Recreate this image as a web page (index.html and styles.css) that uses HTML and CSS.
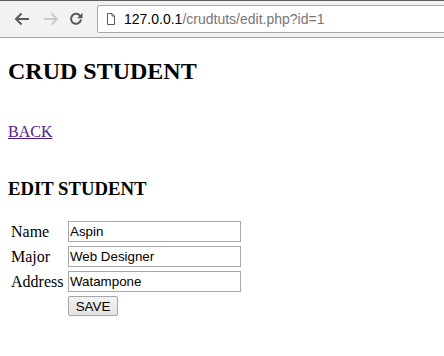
FILE: index.html
```html
<!DOCTYPE html>
<html>

	<head>
		<meta charset="utf-8" />
		<title>Edit Student</title>
		<link rel="stylesheet" href="styles.css">
	</head>

	<body>
		<!-- browser toolbar -->
		<div id="toolbar">
			<span class="nav back">
				<svg width="16" height="14" viewBox="0 0 16 14"><path d="M15 7H2.5M7.5 1.5L2 7l5.5 5.5" fill="none" stroke="#5a5a5a" stroke-width="2"/></svg>
			</span>
			<span class="nav forward">
				<svg width="16" height="14" viewBox="0 0 16 14"><path d="M1 7h12.5M8.5 1.5L14 7l-5.5 5.5" fill="none" stroke="#c9c9c9" stroke-width="2"/></svg>
			</span>
			<span class="nav reload">
				<svg width="14" height="14" viewBox="0 0 14 14"><path d="M11.3 4.2A5 5 0 1 0 12 7.5" fill="none" stroke="#5a5a5a" stroke-width="2"/><path d="M13.5 0.8v5.4H8.1z" fill="#5a5a5a"/></svg>
			</span>
			<div id="omnibox">
				<svg class="doc" width="10" height="12" viewBox="0 0 10 12"><path d="M1.5 0.5h4.5l2.5 2.5v8.5h-7z M6 0.5v2.5h2.5" fill="#fff" stroke="#5a5a5a" stroke-width="1"/></svg>
				<span class="host">127.0.0.1</span><span class="path">/crudtuts/edit.php?id=1</span>
			</div>
		</div>

		<div id="page">
			<h2>CRUD STUDENT</h2>
			<br />
			<a href="index.php">BACK</a>
			<br /><br />
			<h3>EDIT STUDENT</h3>
			<form method="post" action="update.php">
				<table>
					<tr>
						<td class="label">Name</td>
						<td><input type="text" name="name" value="Aspin" /></td>
					</tr>
					<tr>
						<td class="label">Major</td>
						<td><input type="text" name="major" value="Web Designer" /></td>
					</tr>
					<tr>
						<td class="label">Address</td>
						<td><input type="text" name="address" value="Watampone" /></td>
					</tr>
					<tr>
						<td></td>
						<td><input type="submit" class="save" value="SAVE" /></td>
					</tr>
				</table>
			</form>
		</div>
	</body>

</html>
```
FILE: styles.css
```css
body {
	margin: 0;
	font-family: "Liberation Serif", "Times New Roman", serif;
	font-size: 16px;
	background: white;
}

#toolbar {
	height: 38px;
	box-sizing: border-box;
	background: #f2f2f2;
	border-top: 1px solid #5f5f5f;
	border-bottom: 1px solid #a3a3a3;
	padding: 4px 0 0 8px;
	display: flex;
	align-items: flex-start;
	overflow: hidden;
}

.nav {
	flex: none;
	height: 28px;
	display: flex;
	align-items: center;
	justify-content: center;
}

.back {
	width: 28px;
}

.forward {
	width: 30px;
}

.reload {
	width: 20px;
}

#omnibox {
	flex: none;
	width: 360px;
	height: 28px;
	box-sizing: border-box;
	margin-left: 11px;
	background: white;
	border: 1px solid #a9a9a9;
	border-radius: 2px;
	display: flex;
	align-items: center;
	padding-left: 8px;
	font-family: "Liberation Sans", Arial, sans-serif;
	font-size: 14px;
}

.doc {
	flex: none;
	margin-right: 8px;
	margin-top: -1px;
}

.host {
	color: #000;
}

.path {
	color: #767676;
}

#page {
	margin: 8px;
}

h2 {
	font-size: 24px;
	margin: 19.92px 0;
}

h3 {
	font-size: 18.72px;
	margin: 18.72px 0;
}

a {
	color: #551a8b;
}

table {
	border-spacing: 2px;
}

td {
	padding: 1px;
}

.label {
	min-width: 53px;
}

input {
	font-family: "Liberation Sans", Arial, sans-serif;
	font-size: 13.333px;
	color: #000;
	margin: 0;
	display: block;
}

input[type=text] {
	width: 173px;
	height: 21px;
	box-sizing: border-box;
	border: 1px solid #a9a9a9;
	padding: 1px 1px;
}

.save {
	width: 50px;
	height: 20px;
	padding: 0 6px;
	border: 1px solid #a6a6a6;
	border-radius: 2px;
	background: linear-gradient(#f2f2f2, #e4e4e4);
}
```
